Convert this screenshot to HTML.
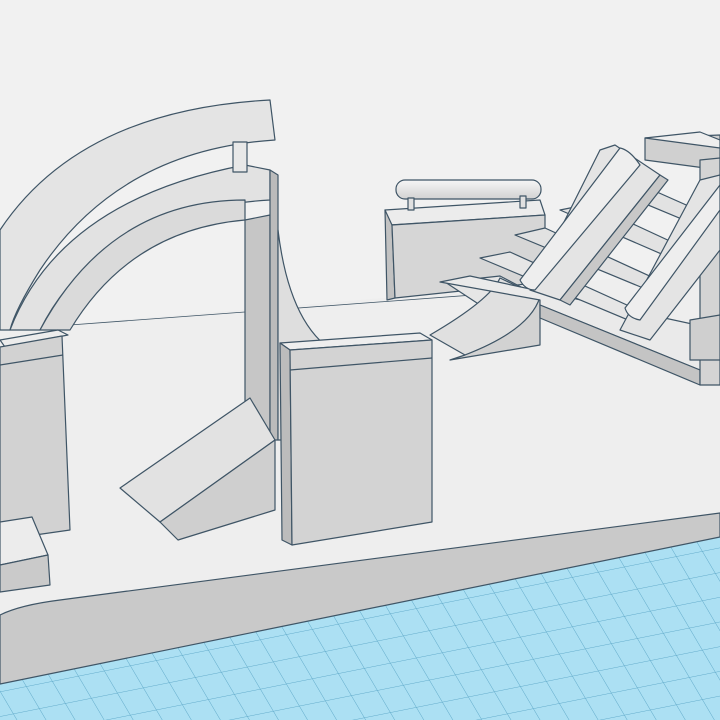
<!DOCTYPE html>
<html><head><meta charset="utf-8"><style>
html,body{margin:0;padding:0;width:720px;height:720px;overflow:hidden;background:#f1f1f1}
svg{display:block}
</style></head><body>
<svg width="720" height="720" viewBox="0 0 720 720" xmlns="http://www.w3.org/2000/svg">
<defs>
<pattern id="g" width="26" height="26" patternUnits="userSpaceOnUse" patternTransform="matrix(1,-0.2,0.5,0.85,0,0)">
<rect width="26" height="26" fill="#ace0f3"/>
<path d="M0 0H26M0 0V26" stroke="#5fa9c9" stroke-width="1" fill="none"/>
</pattern>
<linearGradient id="rail" x1="0" y1="0" x2="0" y2="1"><stop offset="0" stop-color="#f6f6f6"/><stop offset="1" stop-color="#d2d2d2"/></linearGradient>
</defs>
<g stroke="#3f5566" stroke-width="1.2" stroke-linejoin="round">
<rect x="0" y="0" width="720" height="720" fill="#f1f1f1" stroke="none"/>
<path d="M0 330 L720 270 L720 513 L60 600 Q20 605 0 615 Z" fill="#eeeeee" stroke="none"/>
<path d="M70 325 L540 290" fill="none" stroke-width="0.8"/>
<path d="M0 682 L720 537 L720 720 L0 720 Z" fill="url(#g)" stroke="none"/>
<path d="M0 615 Q20 605 60 600 L720 513 L720 537 L0 684 Z" fill="#c9c9c9"/>
<path d="M0 230 Q80 110 270 100 L275 140 Q120 150 40 270 Q15 310 10 330 L0 330 Z" fill="#e4e4e4"/>
<path d="M10 330 Q60 200 245 165 L270 170 L270 200 Q100 210 40 330 Z" fill="#e2e2e2"/>
<path d="M40 330 Q110 200 245 200 L245 220 Q130 230 70 330 Z" fill="#dadada"/>
<rect x="233" y="142" width="14" height="30" fill="#e8e8e8"/>
<path d="M245 220 L270 215 L270 440 L255 443 L245 443 Z" fill="#c6c6c6"/>
<path d="M270 170 L278 175 L278 440 L270 440 Z" fill="#bbbbbb"/>
<path d="M278 230 Q290 330 340 355 L340 440 L278 440 Z" fill="#dedede"/>
<!-- ramp -->
<path d="M120 488 L250 398 L275 440 L160 522 Z" fill="#e2e2e2"/>
<path d="M160 522 L275 440 L275 510 L178 540 Z" fill="#cfcfcf"/>
<path d="M0 340 L58 330 L68 335 L5 347 Z" fill="#ececec"/>
<path d="M0 347 L62 336 L70 530 L0 540 Z" fill="#d2d2d2"/>
<path d="M0 365 L63 355" fill="none"/>
<path d="M0 522 L32 517 L48 555 L0 565 Z" fill="#ececec"/>
<path d="M0 565 L48 555 L50 585 L0 592 Z" fill="#cacaca"/>
<path d="M385 210 L540 200 L545 215 L390 225 Z" fill="#ececec"/>
<path d="M385 210 L392 225 L395 298 L387 300 Z" fill="#c2c2c2"/>
<path d="M392 225 L545 215 L545 282 L395 298 Z" fill="#d6d6d6"/>
<rect x="396" y="180" width="145" height="19" rx="9" fill="url(#rail)"/>
<rect x="408" y="198" width="6" height="12" fill="#e0e0e0"/>
<rect x="520" y="196" width="6" height="12" fill="#e0e0e0"/>
<path d="M445 282 L500 276 L540 297 L480 305 Z" fill="#e6e6e6"/>
<path d="M430 335 Q490 300 500 278 L540 297 Q530 330 465 355 Z" fill="#e0e0e0"/>
<path d="M465 355 Q530 330 540 297 L540 345 L450 360 Z" fill="#d2d2d2"/>
<path d="M280 343 L420 333 L432 340 L290 350 Z" fill="#eeeeee"/>
<path d="M280 343 L290 350 L292 545 L282 540 Z" fill="#bcbcbc"/>
<path d="M290 350 L432 340 L432 522 L292 545 Z" fill="#d3d3d3"/>
<path d="M290 370 L432 358" fill="none"/>
<path d="M440 282 L470 276 L720 330 L720 362 L700 370 L540 305 L540 300 Z" fill="#eaeaea"/>
<path d="M540 305 L700 370 L700 385 L540 318 Z" fill="#c4c4c4"/>
<path d="M480 258 L510 252 L660 320 L640 325 Z" fill="#e6e6e6"/>
<path d="M515 235 L545 228 L680 290 L660 295 Z" fill="#e2e2e2"/>
<path d="M560 210 L590 204 L700 255 L680 262 Z" fill="#e2e2e2"/>
<path d="M600 185 L630 180 L720 220 L720 235 Z" fill="#e2e2e2"/>
<path d="M645 138 L720 135 L720 170 L645 160 Z" fill="#d0d0d0"/>
<path d="M645 138 L700 132 L720 140 L720 148 Z" fill="#eeeeee"/>
<path d="M700 160 L720 158 L720 385 L700 385 Z" fill="#d4d4d4"/>
<path d="M690 320 L720 315 L720 360 L690 360 Z" fill="#cfcfcf"/>
<path d="M600 150 L615 145 L660 175 L560 300 L530 290 Z" fill="#e4e4e4"/>
<path d="M620 148 Q630 150 640 165 L535 290 Q525 290 520 280 Z" fill="#eeeeee"/>
<path d="M560 300 L660 175 L668 180 L570 305 Z" fill="#c8c8c8"/>
<path d="M700 180 L720 175 L720 250 L650 340 L620 330 Z" fill="#e4e4e4"/>
<path d="M720 185 L720 210 L640 320 Q628 318 625 308 Z" fill="#eeeeee"/>
</g>
</svg>
</body></html>
